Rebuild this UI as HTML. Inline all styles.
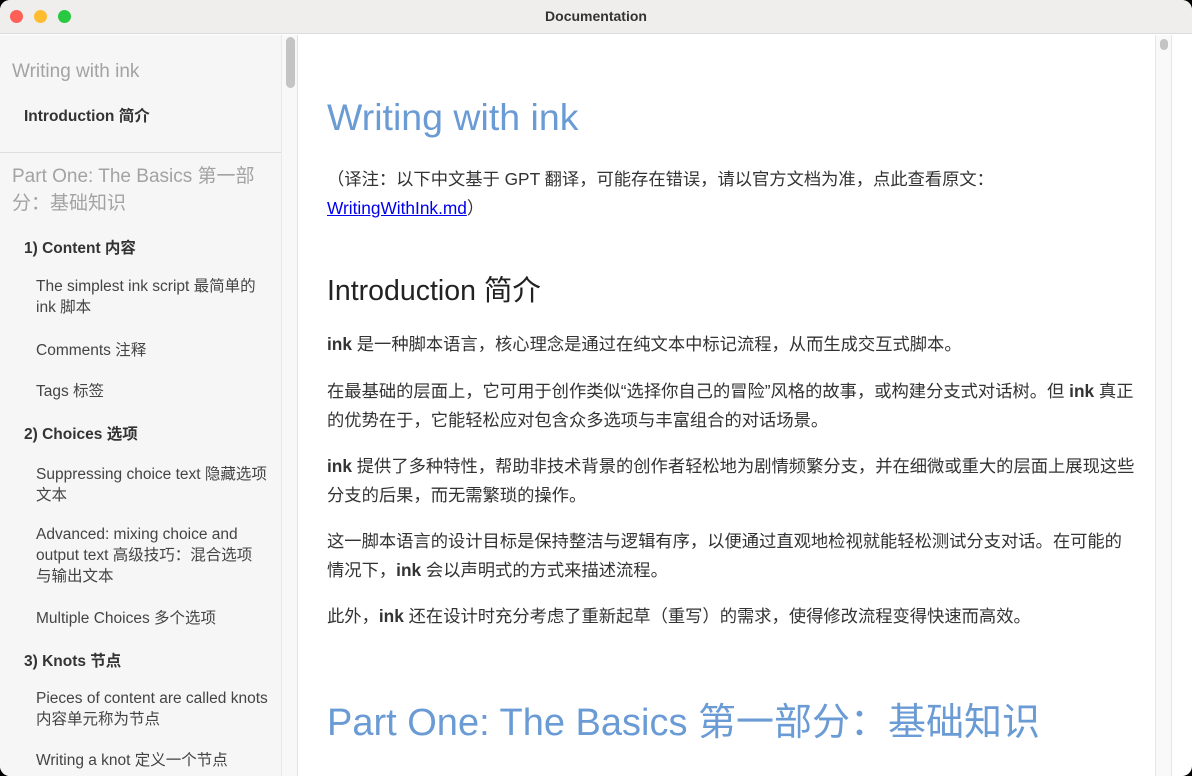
<!DOCTYPE html>
<html><head><meta charset="utf-8"><style>
*{margin:0;padding:0;box-sizing:border-box}
html,body{width:1192px;height:776px;overflow:hidden;background:#000}
body{font-family:"Liberation Sans","Noto Sans CJK SC",sans-serif;position:relative}
.win{position:absolute;left:0;top:0;width:1192px;height:776px;background:#fff;border-radius:10px;overflow:hidden}
.tb{position:absolute;left:0;top:0;width:1192px;height:34px;background:#efeeed;border-bottom:1px solid #dcdcdc;text-align:center;font-weight:bold;font-size:14px;line-height:33px;color:#333}
.dot{position:absolute;top:10px;width:13px;height:13px;border-radius:50%}
.side{position:absolute;left:0;top:35px;width:281px;height:741px;background:#f6f6f6;color:#333}
.sb{position:absolute;left:281px;top:35px;width:17px;height:741px;background:#f8f8f8;border-left:1px solid #e8e8e8;border-right:1px solid #e2e2e2}
.thumb{position:absolute;left:4px;top:2px;width:9px;height:51px;border-radius:5px;background:#c4c4c4}
.side div{position:absolute}
.g{color:#a3a3a3;font-size:19px;left:12px}
.b{font-weight:bold;font-size:15.5px;left:24px}
.i{font-size:15.5px;left:36px;line-height:21px;color:#444}
.main{position:absolute;left:299px;top:35px;width:856px;height:741px;color:#333}
.main div,.main p{position:absolute;left:28px;white-space:nowrap}
.h1{font-size:37.5px;color:#6a9bd4}
p{font-size:17.3px;line-height:29px}
.rs{position:absolute;left:1155px;top:35px;width:17px;height:741px;background:#f9f9f9;border-left:1px solid #e6e6e6;border-right:1px solid #e6e6e6}
</style></head><body>
<div class="win">
<div class="tb">Documentation
<span class="dot" style="left:10px;background:#fe5f57"></span>
<span class="dot" style="left:34px;background:#febc2e"></span>
<span class="dot" style="left:58px;background:#28c840"></span></div>
<div class="side">
<div class="g" style="top:26px">Writing with ink</div>
<div class="b" style="top:69px">Introduction 简介</div>
<div style="left:0;top:117px;width:281px;height:1px;background:#dedede"></div>
<div class="g" style="top:128px;line-height:27px;width:260px">Part One: The Basics 第一部分：基础知识</div>
<div class="b" style="top:201px">1) Content 内容</div>
<div class="i" style="top:241px;width:232px">The simplest ink script 最简单的 ink 脚本</div>
<div class="i" style="top:305px">Comments 注释</div>
<div class="i" style="top:346px">Tags 标签</div>
<div class="b" style="top:387px">2) Choices 选项</div>
<div class="i" style="top:429px;width:240px">Suppressing choice text 隐藏选项文本</div>
<div class="i" style="top:489px;width:225px">Advanced: mixing choice and output text 高级技巧：混合选项与输出文本</div>
<div class="i" style="top:573px">Multiple Choices 多个选项</div>
<div class="b" style="top:614px">3) Knots 节点</div>
<div class="i" style="top:653px;width:242px">Pieces of content are called knots 内容单元称为节点</div>
<div class="i" style="top:715px">Writing a knot 定义一个节点</div>
</div>
<div class="sb"><div class="thumb"></div></div>
<div class="main">
<div class="h1" style="top:61px">Writing with ink</div>
<p style="top:130px">（译注：以下中文基于 GPT 翻译，可能存在错误，请以官方文档为准，点此查看原文：<br><a style="color:#0000ee;text-decoration:underline">WritingWithInk.md</a>）</p>
<div style="top:233px;font-size:28.5px;color:#222">Introduction 简介</div>
<p style="top:295px"><b>ink</b> 是一种脚本语言，核心理念是通过在纯文本中标记流程，从而生成交互式脚本。</p>
<p style="top:342px">在最基础的层面上，它可用于创作类似“选择你自己的冒险”风格的故事，或构建分支式对话树。但 <b>ink</b> 真正<br>的优势在于，它能轻松应对包含众多选项与丰富组合的对话场景。</p>
<p style="top:417px"><b>ink</b> 提供了多种特性，帮助非技术背景的创作者轻松地为剧情频繁分支，并在细微或重大的层面上展现这些<br>分支的后果，而无需繁琐的操作。</p>
<p style="top:492px">这一脚本语言的设计目标是保持整洁与逻辑有序，以便通过直观地检视就能轻松测试分支对话。在可能的<br>情况下，<b>ink</b> 会以声明式的方式来描述流程。</p>
<p style="top:567px">此外，<b>ink</b> 还在设计时充分考虑了重新起草（重写）的需求，使得修改流程变得快速而高效。</p>
<div class="h1" style="top:656px;font-size:38px">Part One: The Basics 第一部分：基础知识</div>
</div>
<div class="rs"><div style="position:absolute;left:4px;top:4px;width:8px;height:11px;border-radius:4px;background:#c4c4c4"></div></div>
</div>
</body></html>
